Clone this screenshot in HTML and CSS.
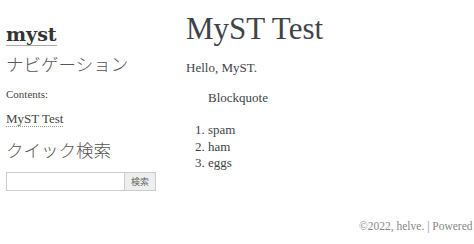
FILE: index.html
```html
<!DOCTYPE html>
<html lang="ja">
<head>
<meta charset="utf-8">
<title>MyST Test — myst</title>
<link rel="stylesheet" href="styles.css">
</head>
<body>
<div class="page">
  <div class="sidebar">
    <h1 class="logo"><a href="#">myst</a></h1>
    <h3 class="side-title nav-title">ナビゲーション</h3>
    <p class="caption">Contents:</p>
    <ul class="toc"><li><a href="#">MyST Test</a></li></ul>
    <h3 class="side-title search-title">クイック検索</h3>
    <form class="search">
      <input class="search-input" type="text" name="q" aria-label="search">
      <button class="search-button" type="button">検索</button>
    </form>
  </div>
  <div class="main">
    <h1 class="title">MyST Test</h1>
    <p class="para">Hello, MyST.</p>
    <blockquote class="quote">Blockquote</blockquote>
    <ol class="list">
      <li>spam</li>
      <li>ham</li>
      <li>eggs</li>
    </ol>
  </div>
</div>
<div class="footer">©2022, helve. | Powered</div>
</body>
</html>
```

FILE: styles.css
```css
html, body {
  margin: 0;
  padding: 0;
  background: #fff;
  overflow: hidden;
}
body {
  font-family: "Liberation Serif", "Noto Sans CJK JP", serif;
  color: #3e4349;
  width: 474px;
  height: 244px;
}
.page {
  display: flex;
  align-items: flex-start;
  padding-left: 6px;
}
.sidebar {
  width: 150px;
  flex: none;
}
.logo {
  margin: 21px 0 0;
  font-family: "DejaVu Serif", serif;
  font-size: 19px;
  line-height: 26px;
  font-weight: bold;
}
.logo a {
  color: #333;
  text-decoration: none;
  border-bottom: 1px solid #aaa;
}
.side-title {
  font-family: "Noto Sans CJK JP", sans-serif;
  font-weight: 300;
  font-size: 17.5px;
  line-height: 20px;
  color: #555;
  margin: 0;
}
.nav-title {
  margin-top: 7px;
}
.caption {
  margin: 13px 0 0;
  font-size: 11px;
  line-height: 14px;
  color: #444;
}
.toc {
  list-style: none;
  margin: 10px 0 0;
  padding: 0;
  font-size: 13px;
  line-height: 16px;
}
.toc a {
  color: #444;
  text-decoration: none;
  border-bottom: 1px dotted #999;
}
.search-title {
  margin-top: 13px;
}
.search {
  display: flex;
  margin-top: 12px;
}
.search-input {
  box-sizing: border-box;
  width: 119px;
  height: 19px;
  margin: 0;
  border: 1px solid #ccc;
  padding: 2px;
  font-size: 11px;
}
.search-button {
  box-sizing: border-box;
  width: 31px;
  height: 19px;
  margin: 0;
  padding: 0;
  border: 1px solid #ccc;
  border-left: none;
  background: #eee;
  color: #666;
  font-family: "Noto Sans CJK JP", sans-serif;
  font-size: 9px;
}
.main {
  margin-left: 30px;
  flex: 1;
}
.title {
  margin: 11px 0 0;
  font-size: 31px;
  line-height: 36px;
  font-weight: normal;
  color: #3e4349;
}
.para {
  margin: 12px 0 0;
  font-size: 13px;
  line-height: 18px;
}
.quote {
  margin: 12px 0 0 22px;
  font-size: 13px;
  line-height: 18px;
}
.list {
  margin: 15px 0 0;
  padding-left: 22px;
  font-size: 13px;
  line-height: 16.5px;
}
.footer {
  margin-top: 28px;
  padding-left: 359px;
  white-space: nowrap;
  font-size: 11.5px;
  line-height: 14px;
  color: #888;
}
```
